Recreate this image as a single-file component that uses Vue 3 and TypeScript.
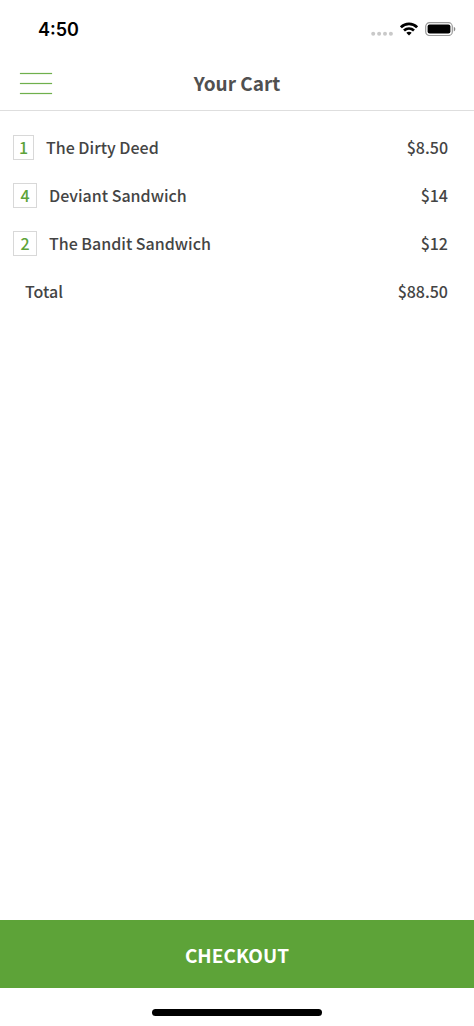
<script setup lang="ts">
interface CartItem {
  quantity: number
  name: string
  price: string
}

const items: CartItem[] = [
  { quantity: 1, name: 'The Dirty Deed', price: '$8.50' },
  { quantity: 4, name: 'Deviant Sandwich', price: '$14' },
  { quantity: 2, name: 'The Bandit Sandwich', price: '$12' },
]
const total = '$88.50'
</script>

<template>
  <div class="screen">
    <div class="status">
      <time class="clock">4:50</time>
      <div class="indicators">
        <svg width="22" height="14" viewBox="0 0 22 14" aria-hidden="true">
          <g fill="#c9c9c9">
            <circle cx="2.2" cy="11.8" r="2" />
            <circle cx="8.1" cy="11.8" r="2" />
            <circle cx="14" cy="11.8" r="2" />
            <circle cx="19.9" cy="11.8" r="2" />
          </g>
        </svg>
        <svg width="18" height="14" viewBox="0 0 18 14" aria-hidden="true">
          <g fill="none" stroke="#000" stroke-width="2.7">
            <path d="M0.9 5.3C5.5 0.8 12.5 0.8 17.1 5.3" />
            <path d="M4 8.6C6.9 5.9 11.1 5.9 14 8.6" />
          </g>
          <path d="M9 13.5L6.3 10.8C7.8 9.4 10.2 9.4 11.7 10.8Z" />
        </svg>
        <svg width="31" height="14" viewBox="0 0 31 14" aria-hidden="true">
          <rect x="0.7" y="0.7" width="26.6" height="12.8" rx="3.8" fill="none" stroke="#999" stroke-width="1.2" />
          <rect x="2.6" y="2.6" width="22.8" height="9" rx="2" />
          <path d="M28.8 4.8C30.8 5.6 30.8 8.6 28.8 9.4Z" fill="#888" />
        </svg>
      </div>
    </div>

    <header class="header">
      <button class="menu" type="button" aria-label="Menu">
        <span></span>
        <span></span>
        <span></span>
      </button>
      <h1>Your Cart</h1>
    </header>

    <main class="cart">
      <ul>
        <li v-for="item in items" :key="item.name" class="row">
          <span class="quantity" :class="{ narrow: item.quantity === 1 }">{{ item.quantity }}</span>
          <span class="name">{{ item.name }}</span>
          <span class="price">{{ item.price }}</span>
        </li>
      </ul>
      <div class="row">
        <span class="name">Total</span>
        <span class="price">{{ total }}</span>
      </div>
    </main>

    <button class="checkout" type="button">CHECKOUT</button>
    <div class="home"><span></span></div>
  </div>
</template>

<style>
body {
  margin: 0;
  background: #fff;
}
</style>

<style scoped>
.screen {
  display: flex;
  flex-direction: column;
  min-height: 100vh;
  color: #505050;
  font-family: "Noto Sans CJK SC", "Noto Sans", sans-serif;
}

.status {
  display: flex;
  align-items: center;
  justify-content: space-between;
  box-sizing: border-box;
  height: 56px;
  padding: 2px 18px 0 38px;
}

.clock {
  padding-top: 2px;
  color: #000;
  font: 600 18px/24px Inter, sans-serif;
}

.indicators {
  display: flex;
  align-items: center;
  gap: 7px;
}

.header {
  display: grid;
  grid-template-columns: 1fr auto 1fr;
  align-items: center;
  height: 54px;
  padding: 0 20px;
  border-bottom: 1px solid #dedede;
}

.menu {
  display: flex;
  flex-direction: column;
  justify-content: space-between;
  width: 32px;
  height: 21px;
  padding: 0;
  border: 0;
  background: none;
}

.menu span {
  height: 1px;
  background: #6fb04c;
  box-shadow: 0 0 1px #5da338;
}

h1 {
  margin: 0;
  font-size: 19px;
  font-weight: 700;
  line-height: 28px;
}

.cart {
  flex: 1;
  padding-top: 12px;
}

ul {
  margin: 0;
  padding: 0;
  list-style: none;
}

.row {
  display: flex;
  align-items: center;
  height: 48px;
  padding: 0 26px 0 13px;
  color: #444;
  font-size: 16px;
  font-weight: 500;
  line-height: 23px;
}

.quantity {
  box-sizing: border-box;
  width: 24px;
  height: 25px;
  border: 1px solid #d8d8d8;
  color: #5da338;
  text-align: center;
}

.quantity.narrow {
  width: 21px;
}

.name {
  flex: 1;
  margin-left: 12px;
}

.checkout {
  height: 68px;
  border: 0;
  background: #5da338;
  color: #fff;
  font: inherit;
  font-size: 19px;
  font-weight: 700;
}

.home {
  display: flex;
  justify-content: center;
  padding: 21px 0 10px;
}

.home span {
  width: 170px;
  height: 7px;
  border-radius: 4px;
  background: #000;
}
</style>
